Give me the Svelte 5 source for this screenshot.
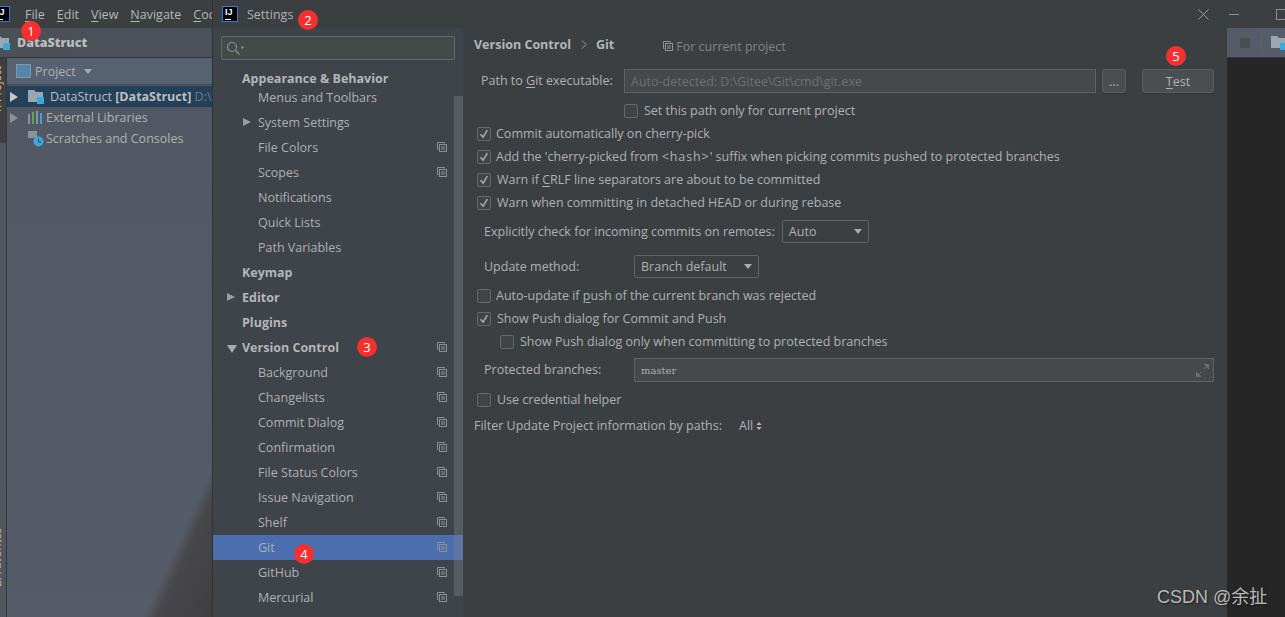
<script>
  const menu = [['F', 'ile'], ['E', 'dit'], ['V', 'iew'], ['N', 'avigate'], ['C', 'ode']];

  const settings = [
    { label: 'Appearance & Behavior', kind: 'head first' },
    { label: 'Menus and Toolbars', kind: 'sub tight' },
    { label: 'System Settings', kind: 'sub', arrow: 'right' },
    { label: 'File Colors', kind: 'sub', copy: true },
    { label: 'Scopes', kind: 'sub', copy: true },
    { label: 'Notifications', kind: 'sub' },
    { label: 'Quick Lists', kind: 'sub' },
    { label: 'Path Variables', kind: 'sub' },
    { label: 'Keymap', kind: 'head' },
    { label: 'Editor', kind: 'head', arrow: 'right' },
    { label: 'Plugins', kind: 'head' },
    { label: 'Version Control', kind: 'head', arrow: 'down', copy: true },
    { label: 'Background', kind: 'sub', copy: true },
    { label: 'Changelists', kind: 'sub', copy: true },
    { label: 'Commit Dialog', kind: 'sub', copy: true },
    { label: 'Confirmation', kind: 'sub', copy: true },
    { label: 'File Status Colors', kind: 'sub', copy: true },
    { label: 'Issue Navigation', kind: 'sub', copy: true },
    { label: 'Shelf', kind: 'sub', copy: true },
    { label: 'Git', kind: 'sub selected', copy: true },
    { label: 'GitHub', kind: 'sub', copy: true },
    { label: 'Mercurial', kind: 'sub', copy: true }
  ];
</script>

{#snippet copyIcon()}
  <svg class="copy" width="10" height="10" viewBox="0 0 10 10" fill="none" stroke="currentColor">
    <path d="M1.500 7.500h-1v-7h7v1" />
    <rect x="2.500" y="2.500" width="7" height="7" />
    <path d="M4 5h4M4 7h4" />
  </svg>
{/snippet}

{#snippet check(on)}
  <span class="box" class:on>
    {#if on}
      <svg width="12" height="12" viewBox="0 0 12 12" fill="none"><path d="M2.500 6.200l2.600 3 4.200-7" stroke="#a7a7a7" stroke-width="1.600" /></svg>
    {/if}
  </span>
{/snippet}

{#snippet folder()}
  <svg class="folder" width="16" height="14" viewBox="0 0 16 14">
    <path d="M0 0h6l2 2h7v10H0z" fill="#9aa7b0" />
    <rect x="9" y="7" width="7" height="7" fill="#3aa7dd" />
  </svg>
{/snippet}

<div class="ide">
  <header class="menubar">
    <span class="logo ide-logo"><b>IJ</b></span>
    <nav>
      {#each menu as [key, rest]}
        <span><u>{key}</u>{rest}</span>
      {/each}
    </nav>
    <span class="win-controls">
      <i class="minimize"></i>
      <i class="restore"></i>
    </span>
  </header>

  <div class="crumbs">
    <span class="crumb-folder">{@render folder()}</span>
    <strong>DataStruct</strong>
    <span class="spacer"></span>
    <i class="stop"></i>
    <i class="divider"></i>
    <span class="crumb-end">{@render folder()}</span>
  </div>

  <div class="workspace">
    <aside class="stripe">
      <div class="stripe-active"><span>1: Project</span></div>
      <span class="stripe-bottom">2: Favorites</span>
    </aside>
    <section class="project">
      <div class="project-head">
        <span class="panel-icon"></span>
        <span>Project</span>
        <i class="caret"></i>
      </div>
      <div class="tree-row active">
        <i class="tri light"></i>
        {@render folder()}
        <span class="tree-label">DataStruct <b>[DataStruct]</b> <em>D:\</em></span>
      </div>
      <div class="tree-row second">
        <i class="tri"></i>
        <svg width="15" height="13" viewBox="0 0 15 13">
          <rect x="0" y="3" width="2" height="10" fill="#8a949c" />
          <rect x="4" y="1" width="2" height="12" fill="#5aa84f" />
          <rect x="8" y="0" width="2" height="13" fill="#8a949c" />
          <rect x="12" y="2" width="2" height="11" fill="#3aa7dd" />
        </svg>
        <span>External Libraries</span>
      </div>
      <div class="tree-row third">
        <svg width="16" height="16" viewBox="0 0 16 16">
          <path d="M0 0h9v7H0z" fill="#8a949c" />
          <circle cx="10.500" cy="10.500" r="5" fill="#3aa7dd" />
          <path d="M10.500 7.500v3.500h2.500" stroke="#2d4a5c" fill="none" />
        </svg>
        <span>Scratches and Consoles</span>
      </div>
    </section>
    <div class="editor"></div>
  </div>

  <div class="dialog">
    <div class="title">
      <span class="logo"><b>IJ</b></span>
      <span class="title-text">Settings</span>
      <svg class="close" width="11" height="11" viewBox="0 0 11 11" stroke="#9c9c9c" fill="none"><path d="M.5.500l10 10M10.500.500l-10 10" /></svg>
    </div>
    <div class="body">
      <aside class="sidebar">
        <div class="search">
          <svg width="20" height="15" viewBox="0 0 20 15" fill="none" stroke="#8b8f92" stroke-width="1.200">
            <circle cx="6" cy="6" r="4.500" />
            <path d="M9.500 9.500l4 4" />
            <path d="M14.500 5.500h4l-2 2.500z" fill="#8b8f92" stroke="none" />
          </svg>
        </div>
        <ul>
          {#each settings as item}
            <li class={item.kind}>
              {#if item.arrow}<i class="arrow {item.arrow}"></i>{/if}
              <span>{item.label}</span>
              {#if item.copy}{@render copyIcon()}{/if}
            </li>
          {/each}
        </ul>
        <div class="scrollbar"></div>
      </aside>

      <main class="content">
        <div class="heading">
          <strong>Version Control</strong>
          <svg class="chevron" width="6" height="9" viewBox="0 0 6 9" fill="none" stroke="#9b9fa2"><path d="M1 .500l4 4-4 4" /></svg>
          <strong class="git">Git</strong>
          <span class="scope">{@render copyIcon()}<span>For current project</span></span>
        </div>

        <div class="row path-row">
          <label class="path-label" for="git-path">Path to <u>G</u>it executable:</label>
          <input id="git-path" class="field" value="Auto-detected: D:\Gitee\Git\cmd\git.exe" disabled />
          <button class="dots">...</button>
          <button class="test"><u>T</u>est</button>
        </div>

        <div class="row only-project">{@render check(false)}<span>Set this path only for current project</span></div>

        <div class="row tick">{@render check(true)}<span>Commit automatically on cherry-pick</span></div>
        <div class="row tick">{@render check(true)}<span>Add the 'cherry-picked from <span class="hash">&lt;hash&gt;</span>' suffix when picking commits pushed to protected branches</span></div>
        <div class="row tick">{@render check(true)}<span class="nudge">Warn if <u>C</u>RLF line separators are about to be committed</span></div>
        <div class="row tick">{@render check(true)}<span class="nudge">Warn when committing in detached HEAD or during rebase</span></div>

        <div class="row remotes">
          <span>Explicitly check for incoming commits on remotes:</span>
          <div class="select auto">Auto<i class="caret"></i></div>
        </div>
        <div class="row update">
          <span class="col-label">Update method:</span>
          <div class="select branch">Branch default<i class="caret"></i></div>
        </div>

        <div class="row tick after-select">{@render check(false)}<span>Auto-update if <u>p</u>ush of the current branch was rejected</span></div>
        <div class="row tick">{@render check(true)}<span class="nudge">Show Push dialog for Commit and Push</span></div>
        <div class="row tick indent">{@render check(false)}<span class="nudge">Show Push dialog only when committing to protected branches</span></div>

        <div class="row protected">
          <span class="col-label">Protected branches:</span>
          <div class="mono-field">
            <code>master</code>
            <svg width="13" height="13" viewBox="0 0 13 13" fill="#6c6f71"><path d="M13 0v5.500L7.500 0zM0 13V7.500L5.500 13z" /><path d="M11 2L8 5M2 11l3-3" stroke="#6c6f71" /></svg>
          </div>
        </div>

        <div class="row tick credential">{@render check(false)}<span class="nudge">Use credential helper</span></div>

        <div class="row filter">
          <span>Filter Update Project information by paths:</span>
          <span class="all">All
            <svg width="6" height="10" viewBox="0 0 6 10" fill="#b5b5b5"><path d="M3 1l2.600 3H.4zM3 9L.4 6h5.200z" /></svg>
          </span>
        </div>
      </main>
    </div>
  </div>

  <span class="badge one">1</span>
  <span class="badge two">2</span>
  <span class="badge three">3</span>
  <span class="badge four">4</span>
  <span class="badge five">5</span>
  <span class="watermark">CSDN @余扯</span>
</div>

<style>
  :global(body) {
    margin: 0;
    background: #262626;
  }

  .ide {
    position: relative;
    width: 1285px;
    height: 617px;
    overflow: hidden;
    display: flex;
    flex-direction: column;
    background: #262626;
    color: #aeb1b3;
    font-family: "Open Sans", "Noto Sans CJK SC", sans-serif;
    font-size: 12.500px;
    line-height: 17px;
  }

  u { text-underline-offset: 2px; }

  .menubar {
    height: 28px;
    flex: none;
    display: flex;
    align-items: center;
    background: #3c3f41;
  }

  .menubar nav {
    display: flex;
    gap: 12px;
    margin-left: 15px;
    color: #b4b6b8;
    white-space: nowrap;
  }

  .logo {
    width: 16px;
    height: 16px;
    flex: none;
    background: #000;
    box-sizing: border-box;
    border: 1px solid #2f7de0;
    color: #fff;
    font: 700 9px/10px "Liberation Sans", sans-serif;
    padding-left: 2px;
    position: relative;
  }

  .logo::after {
    content: "";
    position: absolute;
    left: 2px;
    bottom: 1px;
    width: 6px;
    height: 1px;
    background: #fff;
  }

  .logo b { display: block; }

  .ide-logo { margin-left: -6px; }

  .win-controls {
    margin-left: auto;
    display: flex;
    align-items: center;
    gap: 37px;
    margin-right: -2px;
  }

  .minimize { width: 10px; height: 1px; background: #8f8f8f; }
  .restore { width: 9px; height: 9px; border: 1px solid #8f8f8f; }

  .crumbs {
    height: 30px;
    flex: none;
    display: flex;
    align-items: center;
    background: linear-gradient(90deg, #4b4f56, #4f5561 50%, #555c6a);
    border-bottom: 1px solid #33363a;
    box-sizing: border-box;
    font-weight: 700;
    color: #b9bbbd;
  }

  .crumb-folder { margin-left: -6px; display: flex; }
  .crumbs strong { margin-left: 7px; }
  .spacer { flex: 1; }
  .stop { width: 10px; height: 10px; background: #4c4e50; }
  .divider { width: 1px; height: 20px; background: #5f6062; margin: 0 9px 0 11px; }
  .crumb-end { display: flex; margin-right: -2px; }

  .folder { flex: none; }

  .workspace {
    flex: 1;
    display: flex;
    min-height: 0;
  }

  .stripe {
    width: 7px;
    flex: none;
    box-sizing: border-box;
    background: #50565f;
    border-right: 1px solid #33363a;
    position: relative;
    overflow: hidden;
  }

  .stripe span {
    position: absolute;
    left: -9px;
    writing-mode: vertical-rl;
    transform: rotate(180deg);
    font-size: 11px;
    line-height: 11px;
    white-space: nowrap;
    color: #d3bb85;
  }

  .stripe-active {
    height: 85px;
    background: #3d3f42;
    position: relative;
  }

  .stripe-active span { top: 8px; color: #e8c87f; }
  .stripe-bottom { bottom: 30px; }

  .project {
    width: 206px;
    flex: none;
    background:
      linear-gradient(114.800deg, transparent 85%, #47464a 88%, #3f3e41 100%),
      linear-gradient(180deg, #525863, #565c67);
  }

  .project-head {
    height: 26px;
    display: flex;
    align-items: center;
    gap: 4px;
    padding-left: 9px;
    background: #566172;
    border-bottom: 1px solid #464a50;
  }

  .panel-icon {
    width: 13px;
    height: 12px;
    border: 1px solid #8c949c;
    background: #4f87b0;
  }

  .project-head .caret { margin-left: 4px; }

  .caret {
    width: 0;
    height: 0;
    border-left: 4.500px solid transparent;
    border-right: 4.500px solid transparent;
    border-top: 5px solid #a9adb1;
  }

  .tree-row {
    height: 21px;
    display: flex;
    align-items: center;
    white-space: nowrap;
    overflow: hidden;
    padding-left: 3px;
  }

  .tree-row.active {
    background: #254059;
    color: #bcbfc1;
    margin-top: 1px;
  }

  .tree-row svg { flex: none; margin-left: 10px; }
  .tree-row.active span { margin-left: 6px; }
  .tree-row.second span { margin-left: 3px; }
  .tree-row.third { padding-left: 21px; }
  .tree-row.third span { margin-left: 2px; }
  .tree-row.third svg { margin-left: 0; }
  .tree-label em { font-style: normal; color: #6f7a84; }

  .tri {
    width: 0;
    height: 0;
    flex: none;
    border-top: 5px solid transparent;
    border-bottom: 5px solid transparent;
    border-left: 8px solid #8d9195;
  }

  .tri.light { border-left-color: #c4c7c9; }

  .editor { flex: 1; background: #262626; }

  .dialog {
    position: absolute;
    left: 213px;
    top: 0;
    width: 1014px;
    height: 617px;
    display: flex;
    flex-direction: column;
    background: #3c3f41;
    box-shadow: -1px 0 0 #303234;
  }

  .title {
    height: 28px;
    flex: none;
    display: flex;
    align-items: center;
    padding-left: 9px;
    box-sizing: border-box;
  }

  .title-text { margin-left: 9px; }

  .close { margin-left: auto; margin-right: 18px; }

  .body {
    flex: 1;
    display: flex;
    min-height: 0;
  }

  .sidebar {
    width: 250px;
    flex: none;
    background: #3f434a;
    position: relative;
    overflow: hidden;
  }

  .search {
    margin: 8px 8px 0;
    height: 24px;
    box-sizing: border-box;
    border: 1px solid #63666a;
    border-radius: 2px;
    background: #45494a;
    display: flex;
    align-items: center;
    padding-left: 4px;
  }

  ul {
    list-style: none;
    margin: 0;
    padding: 8px 0 0;
  }

  li {
    height: 25px;
    display: flex;
    align-items: center;
    position: relative;
    padding-left: 45px;
    box-sizing: border-box;
  }

  li.head {
    padding-left: 29px;
    font-weight: 700;
    color: #b3b6b8;
  }

  li.first { height: 21px; }
  li.tight { height: 17px; margin-bottom: 4px; }
  li.selected { background: #4b6eaf; }

  .copy {
    color: #8e9194;
    flex: none;
  }

  li .copy {
    position: absolute;
    left: 224px;
    top: 7px;
  }

  .arrow {
    position: absolute;
    width: 0;
    height: 0;
  }

  .arrow.right {
    top: 8px;
    border-top: 4.500px solid transparent;
    border-bottom: 4.500px solid transparent;
    border-left: 8px solid #9a9da0;
  }

  li.sub .arrow.right { left: 30px; }
  li.head .arrow.right { left: 14px; }

  .arrow.down {
    left: 14px;
    top: 10px;
    border-left: 5px solid transparent;
    border-right: 5px solid transparent;
    border-top: 8px solid #a7aaad;
  }

  .scrollbar {
    position: absolute;
    right: 0;
    top: 68px;
    width: 9px;
    height: 500px;
    background: rgba(130, 134, 140, 0.35);
  }

  .content {
    flex: 1;
    min-width: 0;
    padding: 7px 13px 0 11px;
    white-space: nowrap;
  }

  .row {
    display: flex;
    align-items: center;
    height: 23px;
  }

  .heading {
    display: flex;
    align-items: center;
    height: 18px;
    color: #b3b6b8;
  }

  .chevron { margin: 0 9px 0 10px; }

  .scope {
    display: flex;
    align-items: center;
    gap: 3px;
    margin-left: 49px;
    padding-top: 4px;
    color: #7f8386;
  }

  .path-row {
    height: 24px;
    margin-top: 16px;
    padding-left: 7px;
  }

  .path-label { width: 143px; margin-top: -2px; }

  .field {
    width: 472px;
    height: 24px;
    box-sizing: border-box;
    border: 1px solid #5f6264;
    background: #45494a;
    color: #6d7072;
    font: inherit;
    padding: 0 6px;
  }

  button {
    height: 24px;
    box-sizing: border-box;
    border: 1px solid #5a5d5f;
    border-radius: 3px;
    background: #4a4e50;
    color: #b0b3b5;
    font: inherit;
    padding: 0;
    box-shadow: 0 1px 1px #33363a;
  }

  .dots { width: 24px; margin-left: 6px; }
  .test { width: 72px; margin-left: 16px; }

  .only-project {
    margin-top: 6px;
    padding-left: 150px;
  }

  .only-project .box { margin-right: 6px; }

  .box {
    width: 14px;
    height: 14px;
    flex: none;
    box-sizing: border-box;
    border: 1px solid #656769;
    border-radius: 2px;
    background: #414446;
    margin-right: 5px;
    display: flex;
  }

  .tick { padding-left: 3px; }
  .indent { padding-left: 26px; }
  .nudge { margin-left: 1px; }
  .hash { letter-spacing: 0.900px; }

  .remotes {
    height: 24px;
    margin-top: 5px;
    padding-left: 10px;
    gap: 7px;
  }

  .select {
    height: 23px;
    box-sizing: border-box;
    border: 1px solid #606365;
    border-radius: 2px;
    display: flex;
    align-items: center;
    padding: 0 6px;
    position: relative;
    background: #3c3f41;
  }

  .select .caret { position: absolute; right: 6px; top: 8px; }
  .auto { width: 87px; }
  .branch { width: 125px; }

  .update {
    margin-top: 11px;
    padding-left: 10px;
    height: 24px;
  }

  .col-label { width: 150px; }

  .after-select { margin-top: 6px; }

  .protected {
    margin-top: 5px;
    height: 24px;
    padding-left: 10px;
  }

  .protected .col-label { margin-top: -2px; }

  .mono-field {
    width: 580px;
    height: 24px;
    box-sizing: border-box;
    border: 1px solid #5f6264;
    background: #45494a;
    display: flex;
    align-items: center;
    justify-content: space-between;
    padding: 0 4px 0 6px;
  }

  code {
    font: 10px "DejaVu Serif", "Liberation Mono", monospace;
    color: #a9acae;
  }

  .credential { margin-top: 6px; }

  .filter {
    margin-top: 3px;
    gap: 17px;
  }

  .all {
    display: flex;
    align-items: center;
    gap: 3px;
  }

  .badge {
    position: absolute;
    width: 20px;
    height: 20px;
    border-radius: 50%;
    background: #f5302f;
    color: #fff;
    font: 13px/20px "Open Sans", sans-serif;
    text-align: center;
  }

  .one { left: 21px; top: 21px; }
  .two { left: 298px; top: 10px; }
  .three { left: 357px; top: 337px; }
  .four { left: 294px; top: 544px; }
  .five { left: 1166px; top: 46px; }

  .watermark {
    position: absolute;
    left: 1157px;
    top: 586px;
    font: 18px/22px "Liberation Sans", "Noto Sans CJK SC", sans-serif;
    color: #b9b9b9;
    text-shadow: 1px 1px 2px #1c1c1c;
  }
</style>
